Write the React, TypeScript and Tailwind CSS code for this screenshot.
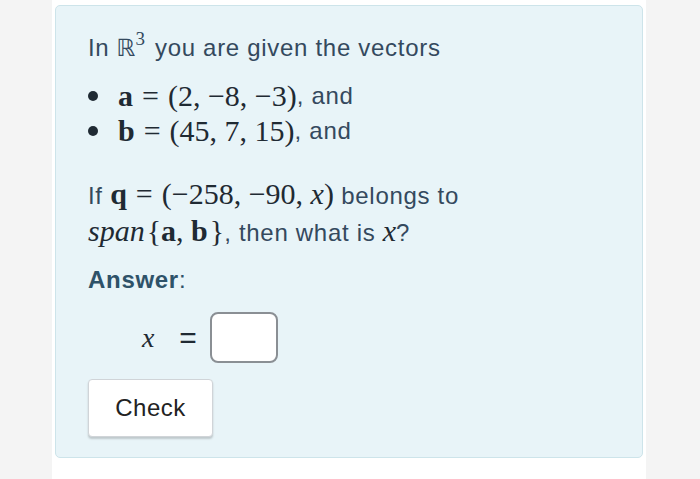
import React from "react";

const serif = "font-['Liberation_Serif','DejaVu_Serif',serif]";
const math = `${serif} text-[30px] tracking-normal text-[#1f2a33]`;

const Eq = () => <span className="mx-[9px]">=</span>;

const App = () => {
  return (
    <div className="flex h-[479px] w-[700px] bg-white font-['Liberation_Sans',Arial,sans-serif] text-[#34495e]">
      <div className="w-[52px] bg-[#f4f4f4]" />
      <div className="w-[594px] bg-white px-[3px] pt-[5px]">
        <div className="h-[453px] rounded-[5px] border border-[#cde4ea] bg-[#e8f4f8] pl-[32px] pt-[24px] tracking-[0.7px]">
          <p className="text-[24px] leading-[36px]">
            In
            <span className="ml-[7px] font-['DejaVu_Sans',sans-serif] text-[24px] tracking-normal">ℝ</span>
            <sup className={`${serif} relative -top-[11px] text-[19px] tracking-normal`}>3</sup>
            <span className="ml-[10px]">you are given the vectors</span>
          </p>
          <ul className="mt-[12px]">
            {[
              ["a", "(2, −8, −3)"],
              ["b", "(45, 7, 15)"],
            ].map(([v, t]) => (
              <li key={v} className="flex items-center text-[24px] leading-[35px]">
                <span className="mr-[20px] inline-block h-[10px] w-[10px] shrink-0 rounded-full bg-[#1f2a33]" />
                <span className={`${math} whitespace-pre`}>
                  <b>{v}</b>
                  <Eq />
                  {t}
                </span>
                <span>, and</span>
              </li>
            ))}
          </ul>
          <p className="mt-[28px] text-[24px] leading-[35px]">
            If{" "}
            <span className={`${math} whitespace-pre`}>
              <b>q</b>
              <Eq />
              (−258, −90, <i>x</i>)
            </span>{" "}
            belongs to
            <br />
            <span className={math}>
              <i>span</i>
              <span className="ml-[2px]">{"{"}</span>
              <b>a</b>, <b>b</b>
              <span className="ml-[2px]">{"}"}</span>
            </span>
            , then what is{" "}
            <i className={math}>x</i>?
          </p>
          <p className="mt-[12px] text-[24px] font-bold leading-[36px] text-[#2e5269]">
            Answer<span className="font-normal">:</span>
          </p>
          <div className="mt-[14px] flex items-center">
            <span className={`${serif} ml-[54px] text-[28px] italic text-[#1f2a33]`}>x</span>
            <span className="ml-[24px] text-[30px] text-[#1f2a33]">=</span>
            <div className="ml-[13px] h-[51px] w-[68px] rounded-[8px] border-2 border-[#8a8f94] bg-white" />
          </div>
          <button className="mt-[16px] h-[58px] w-[125px] rounded-[4px] border border-[#d0d4d8] bg-white text-[24px] tracking-[0.5px] text-[#222] shadow-[0_2px_2px_rgba(0,0,0,0.18)]">
            Check
          </button>
        </div>
      </div>
      <div className="flex-1 bg-[#f4f4f4]" />
    </div>
  );
};

export default App;
